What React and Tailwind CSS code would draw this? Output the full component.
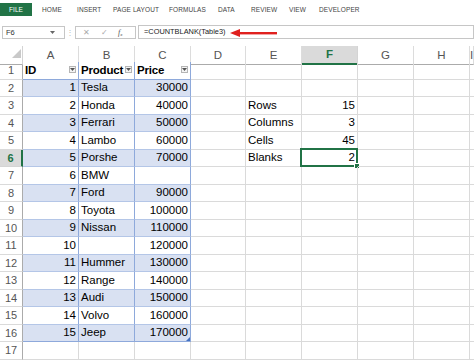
import React from "react";

const cols = "grid grid-cols-[23px_56px_56px_56px_55px_56px_56px_56px_56px_1fr]";
const letters = ["A", "B", "C", "D", "E", "F", "G", "H", "I"];

const tabs = [
  ["HOME", "w-[35px]"],
  ["INSERT", "w-[36px]"],
  ["PAGE LAYOUT", "w-[56px]"],
  ["FORMULAS", "w-[49px]"],
  ["DATA", "w-[33px]"],
  ["REVIEW", "w-[38px]"],
  ["VIEW", "w-[30px]"],
  ["DEVELOPER", "w-[50px]"],
];

const cars = [
  [1, "Tesla", 30000],
  [2, "Honda", 40000],
  [3, "Ferrari", 50000],
  [4, "Lambo", 60000],
  [5, "Porshe", 70000],
  [6, "BMW", ""],
  [7, "Ford", 90000],
  [8, "Toyota", 100000],
  [9, "Nissan", 110000],
  [10, "", 120000],
  [11, "Hummer", 130000],
  [12, "Range", 140000],
  [13, "Audi", 150000],
  [14, "Volvo", 160000],
  [15, "Jeep", 170000],
];

const stats = { 3: ["Rows", 15], 4: ["Columns", 3], 5: ["Cells", 45], 6: ["Blanks", 2] };

function FilterBtn() {
  return (
    <span className="ml-auto mb-[1px] w-[7px] h-[7px] shrink-0 border border-[#b5b5b5] bg-[#f4f4f4] flex items-center justify-center">
      <svg width="5" height="3" viewBox="0 0 5 3">
        <polygon points="0,0 5,0 2.5,3" fill="#555" />
      </svg>
    </span>
  );
}

function TableCell({ r, children, right, bold, last }) {
  const band = r >= 2 && r % 2 === 0 ? "bg-[#d9e1f2]" : "bg-white";
  const bottom = r === 1 || r === 16 ? "border-b-[#8ea9db]" : "border-b-[#b4c6e7]";
  return (
    <div
      className={`relative h-[17.5px] flex items-center px-[2px] border-r border-b border-r-[#8ea9db] ${bottom} ${band} ${
        right ? "justify-end" : ""
      } ${bold ? "font-bold tracking-[-0.2px]" : ""}`}
    >
      {children}
      {r === 1 && <FilterBtn />}
      {last && (
        <svg className="absolute right-0 bottom-0" width="4" height="4" viewBox="0 0 4 4">
          <polygon points="4,0 4,4 0,4" fill="#4472c4" />
        </svg>
      )}
    </div>
  );
}

function PlainCell({ children, right, selected }) {
  return (
    <div
      className={`relative h-[17.5px] flex items-center px-[2px] border-r border-b border-[#dadada] ${
        right ? "justify-end" : ""
      }`}
    >
      {children}
      {selected && (
        <div className="absolute -left-[2px] -top-[2px] right-[-1px] bottom-[-1px] border-2 border-[#217346]">
          <div className="absolute -right-[4px] -bottom-[4px] w-[6px] h-[6px] bg-[#217346] border border-white" />
        </div>
      )}
    </div>
  );
}

export default function App() {
  const rows = Array.from({ length: 17 }, (_, i) => i + 1);

  return (
    <div
      className="relative w-[474px] h-[361px] overflow-hidden bg-white text-black"
      style={{ fontFamily: "'Liberation Sans', Arial, sans-serif" }}
    >
      {/* Ribbon tabs */}
      <div className="h-[19px] flex items-center text-[6.5px] text-[#444] tracking-[0.1px]">
        <div className="w-[32px] h-[13px] bg-[#217346] text-white flex items-center justify-center">FILE</div>
        <div className="flex ml-[10px]">
          {tabs.map(([t, w]) => (
            <span key={t} className={w}>
              {t}
            </span>
          ))}
        </div>
      </div>

      {/* Formula bar */}
      <div className="h-[27px] pt-[7px] flex text-[7.5px] text-[#333]">
        <div className="ml-[2px] w-[63px] h-[13px] border border-[#c6c6c6] flex items-center pl-[3px] pr-[9px]">
          <span>F6</span>
          <svg className="ml-auto" width="5" height="3" viewBox="0 0 5 3">
            <polygon points="0,0 5,0 2.5,3" fill="#666" />
          </svg>
        </div>
        <div className="w-[10px] h-[13px] flex items-center justify-center text-[#bbb] text-[8px]">⋮</div>
        <div className="w-[61px] h-[13px] border border-[#c6c6c6] flex items-center text-[#aaa]">
          <span className="ml-[7px] text-[8px]">✕</span>
          <span className="ml-[11px] text-[8px]">✓</span>
          <span className="ml-[10px] text-[#555] italic text-[8px]" style={{ fontFamily: "'Liberation Serif', serif" }}>
            f<sub className="text-[5px]">x</sub>
          </span>
        </div>
        <div className="ml-[2px] flex-1 h-[14px] -mt-[1px] border border-[#c6c6c6] flex items-center pl-[5px] text-[7.4px] text-[#222]">
          =COUNTBLANK(Table3)
        </div>
      </div>

      {/* Red arrow annotation */}
      <svg className="absolute left-[228px] top-[28px]" width="52" height="10" viewBox="0 0 52 10">
        <polygon points="2,5 12,1 12,9" fill="#e0201e" />
        <rect x="11" y="4" width="38" height="2.4" fill="#e0201e" />
      </svg>

      {/* Column headers */}
      <div className={`${cols} h-[16px] text-[11.5px] text-[#555]`}>
        <div className="border-r border-b border-r-[#d4d4d4] border-b-[#ababab] relative">
          <svg className="absolute left-0 top-0" width="23" height="16" viewBox="0 0 23 16">
            <polygon points="21,3 21,12 12,12" fill="#c9c9c9" />
          </svg>
        </div>
        {letters.map((l) =>
          l === "F" ? (
            <div
              key={l}
              className="border-r border-r-[#d4d4d4] border-b-2 border-b-[#217346] bg-[#dadada] flex items-center justify-center font-bold text-[#217346]"
            >
              {l}
            </div>
          ) : (
            <div key={l} className="border-r border-b border-r-[#dcdcdc] border-b-[#ababab] flex items-center justify-center">
              {l}
            </div>
          )
        )}
      </div>

      {/* Sheet rows */}
      {rows.map((r) => {
        const car = r >= 2 && r <= 16 ? cars[r - 2] : null;
        const stat = stats[r];
        return (
          <div key={r} className={`${cols} text-[11.5px]`}>
            {r === 6 ? (
              <div className="h-[17.5px] border-r-2 border-r-[#217346] border-b border-b-[#d4d4d4] bg-[#dadada] flex items-center justify-center text-[11px] font-bold text-[#217346]">
                {r}
              </div>
            ) : (
              <div className="h-[17.5px] border-r border-b border-r-[#ababab] border-b-[#dadada] flex items-center justify-center text-[11px] text-[#555]">
                {r}
              </div>
            )}

            {r === 1 ? (
              <>
                <TableCell r={1} bold>ID</TableCell>
                <TableCell r={1} bold>Product</TableCell>
                <TableCell r={1} bold>Price</TableCell>
              </>
            ) : car ? (
              <>
                <TableCell r={r} right>{car[0]}</TableCell>
                <TableCell r={r}>{car[1]}</TableCell>
                <TableCell r={r} right last={r === 16}>{car[2]}</TableCell>
              </>
            ) : (
              <>
                <PlainCell />
                <PlainCell />
                <PlainCell />
              </>
            )}

            <PlainCell />
            <PlainCell>{stat ? stat[0] : null}</PlainCell>
            <PlainCell right selected={r === 6}>{stat ? stat[1] : null}</PlainCell>
            <PlainCell />
            <PlainCell />
            <PlainCell />
          </div>
        );
      })}
    </div>
  );
}
